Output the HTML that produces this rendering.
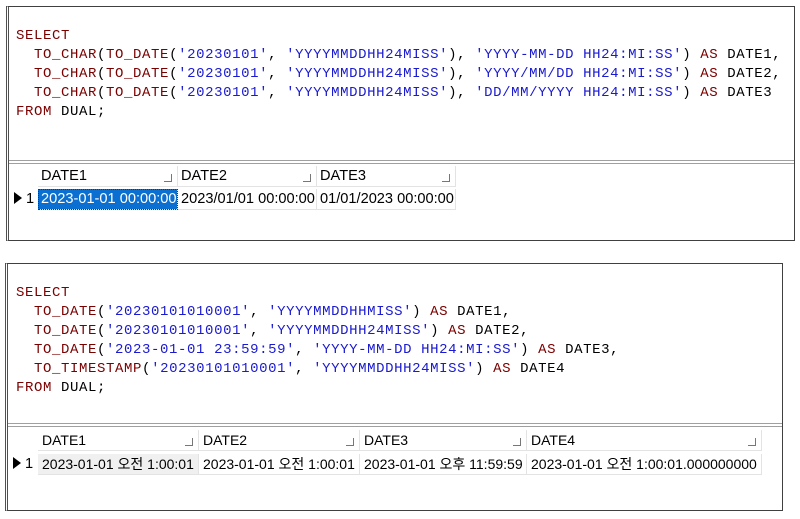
<!DOCTYPE html>
<html><head><meta charset="utf-8"><style>
body{margin:0;width:800px;height:519px;background:#fff;position:relative;overflow:hidden}
.p{position:absolute;border:1px solid #404040;border-left:3px double #505050;background:#fff}
.code{position:absolute;font-family:"Liberation Mono",monospace;font-size:14px;letter-spacing:0.6px;line-height:19px;white-space:pre;color:#000}
.k{color:#7a0000}.s{color:#1a1ad0}
.sep{position:absolute;left:0;right:0;height:2px;border-top:1px solid #a0a0a0;border-bottom:1px solid #a0a0a0}
.c{position:absolute;font-family:"Liberation Sans","Noto Sans CJK KR",sans-serif;font-size:14.6px;line-height:21px;height:21px;box-sizing:border-box;padding-left:3px;white-space:nowrap;overflow:hidden;border-right:1px solid #e3e3e3;border-bottom:1px solid #e3e3e3;color:#000}
.p2 .c{font-size:14px;padding-left:4px}
.h .m{position:absolute;right:5px;top:8px;width:7px;height:7px;border-right:1px solid #777;border-bottom:1px solid #777}
.ind{position:absolute;font-family:"Liberation Sans",sans-serif;font-size:14.6px;line-height:21px}
.tri{display:inline-block;width:0;height:0;border-left:8px solid #000;border-top:6px solid transparent;border-bottom:6px solid transparent;vertical-align:-1px;margin-right:4px}
</style></head><body>

<div class="p" style="left:6px;top:6px;width:785px;height:233px">
<div class="code" style="left:7px;top:20px"><span class="k">SELECT</span>
  <span class="k">TO_CHAR</span>(<span class="k">TO_DATE</span>(<span class="s">'20230101'</span>, <span class="s">'YYYYMMDDHH24MISS'</span>), <span class="s">'YYYY-MM-DD HH24:MI:SS'</span>) <span class="k">AS</span> DATE1,
  <span class="k">TO_CHAR</span>(<span class="k">TO_DATE</span>(<span class="s">'20230101'</span>, <span class="s">'YYYYMMDDHH24MISS'</span>), <span class="s">'YYYY/MM/DD HH24:MI:SS'</span>) <span class="k">AS</span> DATE2,
  <span class="k">TO_CHAR</span>(<span class="k">TO_DATE</span>(<span class="s">'20230101'</span>, <span class="s">'YYYYMMDDHH24MISS'</span>), <span class="s">'DD/MM/YYYY HH24:MI:SS'</span>) <span class="k">AS</span> DATE3
<span class="k">FROM</span> DUAL;</div>
<div class="sep" style="top:153px"></div>
<div class="c h" style="left:29px;top:159px;width:140px">DATE1<span class="m"></span></div>
<div class="c h" style="left:169px;top:159px;width:139px">DATE2<span class="m"></span></div>
<div class="c h" style="left:308px;top:159px;width:139px">DATE3<span class="m"></span></div>
<div class="ind" style="left:5px;top:182px"><span class="tri"></span>1</div>
<div class="c" style="left:29px;top:182px;width:140px;background:#0a6fd0;color:#fff;outline:1px dotted #333;outline-offset:-1px">2023-01-01 00:00:00</div>
<div class="c" style="left:169px;top:182px;width:139px">2023/01/01 00:00:00</div>
<div class="c" style="left:308px;top:182px;width:139px">01/01/2023 00:00:00</div>
</div>

<div class="p p2" style="left:5px;top:263px;width:774px;height:246px">
<div class="code" style="left:8px;top:20px"><span class="k">SELECT</span>
  <span class="k">TO_DATE</span>(<span class="s">'20230101010001'</span>, <span class="s">'YYYYMMDDHHMISS'</span>) <span class="k">AS</span> DATE1,
  <span class="k">TO_DATE</span>(<span class="s">'20230101010001'</span>, <span class="s">'YYYYMMDDHH24MISS'</span>) <span class="k">AS</span> DATE2,
  <span class="k">TO_DATE</span>(<span class="s">'2023-01-01 23:59:59'</span>, <span class="s">'YYYY-MM-DD HH24:MI:SS'</span>) <span class="k">AS</span> DATE3,
  <span class="k">TO_TIMESTAMP</span>(<span class="s">'20230101010001'</span>, <span class="s">'YYYYMMDDHH24MISS'</span>) <span class="k">AS</span> DATE4
<span class="k">FROM</span> DUAL;</div>
<div class="sep" style="top:159px"></div>
<div class="c h" style="left:30px;top:166px;width:161px">DATE1<span class="m"></span></div>
<div class="c h" style="left:191px;top:166px;width:161px">DATE2<span class="m"></span></div>
<div class="c h" style="left:352px;top:166px;width:167px">DATE3<span class="m"></span></div>
<div class="c h" style="left:519px;top:166px;width:235px">DATE4<span class="m"></span></div>
<div class="ind" style="left:5px;top:190px"><span class="tri"></span>1</div>
<div class="c" style="left:30px;top:190px;width:161px;background:#f0f0f0">2023-01-01 오전 1:00:01</div>
<div class="c" style="left:191px;top:190px;width:161px">2023-01-01 오전 1:00:01</div>
<div class="c" style="left:352px;top:190px;width:167px">2023-01-01 오후 11:59:59</div>
<div class="c" style="left:519px;top:190px;width:235px">2023-01-01 오전 1:00:01.000000000</div>
</div>

</body></html>
